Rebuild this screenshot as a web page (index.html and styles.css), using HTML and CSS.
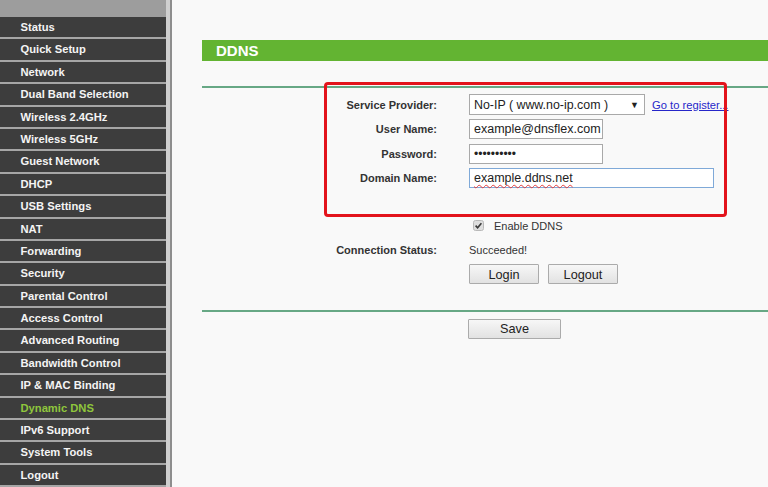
FILE: index.html
```html
<!DOCTYPE html>
<html lang="en">
<head>
<meta charset="utf-8">
<title>DDNS</title>
<link rel="stylesheet" href="styles.css">
</head>
<body>
<nav class="sidebar">
  <div class="sidebar-top"></div>
  <a class="menu-item">Status</a>
  <a class="menu-item">Quick Setup</a>
  <a class="menu-item">Network</a>
  <a class="menu-item">Dual Band Selection</a>
  <a class="menu-item">Wireless 2.4GHz</a>
  <a class="menu-item">Wireless 5GHz</a>
  <a class="menu-item">Guest Network</a>
  <a class="menu-item">DHCP</a>
  <a class="menu-item">USB Settings</a>
  <a class="menu-item">NAT</a>
  <a class="menu-item">Forwarding</a>
  <a class="menu-item">Security</a>
  <a class="menu-item">Parental Control</a>
  <a class="menu-item">Access Control</a>
  <a class="menu-item">Advanced Routing</a>
  <a class="menu-item">Bandwidth Control</a>
  <a class="menu-item">IP &amp; MAC Binding</a>
  <a class="menu-item active">Dynamic DNS</a>
  <a class="menu-item">IPv6 Support</a>
  <a class="menu-item">System Tools</a>
  <a class="menu-item">Logout</a>
</nav>
<main class="main">
  <div class="title-bar">DDNS</div>
  <div class="rule"></div>
  <div class="form">
    <div class="label">Service Provider:</div>
    <div class="field">
      <div class="select"><span>No-IP ( www.no-ip.com )</span><span class="arrow">&#9660;</span></div>
      <a class="link">Go to register...</a>
    </div>
    <div class="label">User Name:</div>
    <div class="field"><div class="input">example@dnsflex.com</div></div>
    <div class="label">Password:</div>
    <div class="field"><div class="input input-pass">&#8226;&#8226;&#8226;&#8226;&#8226;&#8226;&#8226;&#8226;&#8226;&#8226;</div></div>
    <div class="label">Domain Name:</div>
    <div class="field"><div class="input input-wide"><span class="misspelled">example.ddns.net</span></div></div>
    <div class="spacer"></div>
    <div class="label"></div>
    <div class="field">
      <svg class="checkbox" width="11" height="11" viewBox="0 0 11 11"><rect x="0.5" y="0.5" width="10" height="10" rx="2" fill="#dedede" stroke="#b9b9b9"/><path d="M2.6 5.6 L4.6 7.8 L8.4 3.2" fill="none" stroke="#3a3a3a" stroke-width="1.6"/></svg>
      <span class="text">Enable DDNS</span>
    </div>
    <div class="label">Connection Status:</div>
    <div class="field"><span class="text">Succeeded!</span></div>
    <div class="label"></div>
    <div class="field buttons">
      <button class="btn">Login</button>
      <button class="btn">Logout</button>
    </div>
  </div>
  <div class="rule rule-bottom"></div>
  <div class="save-row"><button class="btn btn-save">Save</button></div>
</main>
<div class="annotation"></div>
</body>
</html>
```

FILE: styles.css
```css
* { box-sizing: border-box; }
html, body { margin: 0; padding: 0; }
body {
  position: relative;
  display: flex;
  width: 768px;
  height: 487px;
  overflow: hidden;
  font-family: "Liberation Sans", Arial, sans-serif;
  background: #f9f9f9;
  color: #333;
}
.sidebar {
  width: 170px;
  flex: none;
  display: flex;
  flex-direction: column;
  background: #a6a6a6;
  border-right: 4px solid #cfcfcf;
}
.sidebar-top {
  height: 17px;
  flex: none;
  background: #9d9d9d;
}
.menu-item {
  display: block;
  flex: none;
  height: 20.4px;
  line-height: 21px;
  margin-bottom: 2px;
  padding-left: 20.5px;
  background: #3d3d3d;
  color: #f4f4f4;
  font-weight: bold;
  font-size: 11.2px;
  white-space: nowrap;
}
.menu-item.active { color: #8fc63c; }
.main {
  flex: 1;
  border-left: 2px solid #8e8e8e;
  padding-top: 40px;
  padding-left: 30px;
}
.title-bar {
  height: 21px;
  line-height: 21px;
  background: #63b432;
  color: #fff;
  font-weight: bold;
  font-size: 15px;
  padding-left: 14px;
}
.rule {
  height: 2px;
  background: #67a885;
  margin-top: 25px;
}
.form {
  margin-top: 4.8px;
  display: grid;
  grid-template-columns: 235px 1fr;
  column-gap: 32px;
  grid-template-rows: 24.4px 24.4px 24.4px 24.4px 23px 24.4px 24.4px 24.4px;
}
.spacer { grid-column: 1 / span 2; }
.label {
  display: flex;
  align-items: center;
  justify-content: flex-end;
  font-weight: bold;
  font-size: 11px;
  color: #333;
}
.field {
  display: flex;
  align-items: center;
}
.select {
  width: 176px;
  height: 21px;
  display: flex;
  align-items: center;
  justify-content: space-between;
  padding: 0 5px 0 4px;
  border: 1px solid #a9a9a9;
  background: #fff;
  font-size: 12.4px;
  color: #222;
}
.arrow { font-size: 9px; color: #222; }
.link {
  margin-left: 7px;
  font-size: 11.2px;
  color: #2626c9;
  text-decoration: underline;
}
.input {
  width: 134px;
  height: 20px;
  display: flex;
  align-items: center;
  padding: 0 4px;
  border: 1px solid #a9a9a9;
  background: #fff;
  font-size: 12.5px;
  color: #222;
  white-space: nowrap;
}
.input-pass { font-size: 12px; letter-spacing: 0; }
.input-wide {
  width: 245px;
  border-color: #7fa9d8;
}
.misspelled {
  text-decoration: underline wavy #e23c3c;
  text-decoration-thickness: 1px;
  text-underline-offset: 2px;
  text-decoration-skip-ink: none;
}
.checkbox { margin-left: 4px; margin-right: 10px; }
.text { font-size: 11px; color: #333; }
.buttons { gap: 9px; }
.btn {
  width: 70px;
  height: 20px;
  padding: 1px 0 0;
  border: 1px solid #ababab;
  border-radius: 1px;
  background: linear-gradient(#f7f7f7, #e2e2e2);
  font-family: "Liberation Sans", Arial, sans-serif;
  font-size: 12.7px;
  color: #222;
}
.rule-bottom { margin-top: 23.4px; }
.save-row {
  margin-top: 7px;
  padding-left: 266px;
}
.btn-save { width: 93px; }
.annotation {
  position: absolute;
  left: 324px;
  top: 82px;
  width: 403px;
  height: 135px;
  border: 3px solid #e3141c;
  border-radius: 4px;
  pointer-events: none;
}
```
